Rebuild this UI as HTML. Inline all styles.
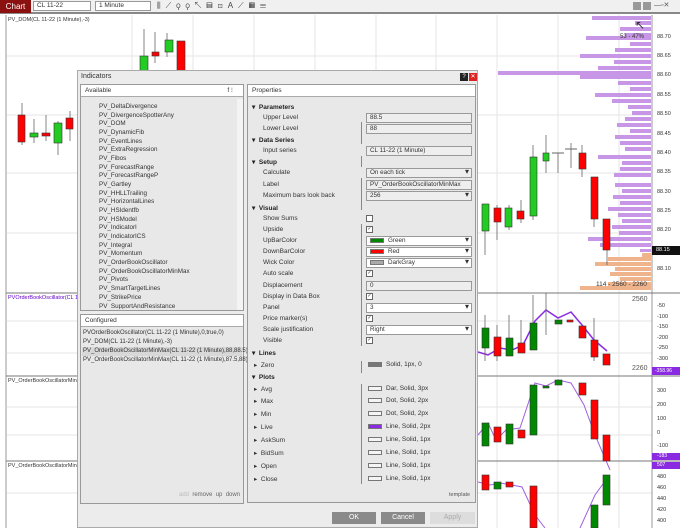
<!DOCTYPE html>
<html><head><meta charset="utf-8"><style>
*{margin:0;padding:0;box-sizing:border-box}
body{width:680px;height:528px;overflow:hidden;background:#fff;font-family:"Liberation Sans",sans-serif;font-size:6.5px;color:#333;position:relative}
.a{position:absolute;white-space:nowrap}
.tb{left:0;top:0;width:680px;height:14px;background:#f0f0f0;border-bottom:2px solid #888}
.sel{height:10px;top:1px;background:#fff;border:1px solid #999;font-size:6.5px;line-height:8px;padding-left:3px}
.dlg{left:77px;top:70px;width:401px;height:458px;background:#ececec;border:1px solid #aaa}
.pn{background:#e8e8e8;border:1px solid #999}
.hd{background:#fff;border-bottom:1px solid #aaa;height:12px;line-height:11px;padding-left:4px;font-size:6.5px}
.li{left:18px;font-size:6.3px;color:#333}
.pr{font-size:6.5px;color:#333}
.sec{font-weight:bold;font-size:6.5px;color:#222}
.vb{left:118px;width:106px;height:10px;border:1px solid #999;background:#eee;line-height:8px;padding-left:3px;font-size:6.3px}
.cb{left:118px;width:7px;height:7px;border:1px solid #666;background:#fff;font-size:5px;line-height:5px;text-align:center}
.sw{display:inline-block;width:14px;height:5px;border:1px solid #777;vertical-align:middle;margin-right:4px}
.dd::after{content:"▾";position:absolute;right:2px;top:-1px;font-size:8px}
.btn{top:512px;height:12px;background:#8a8a8a;color:#fff;text-align:center;line-height:12px;font-size:7px}
.ax{left:657px;font-size:5.5px;color:#333}
</style></head><body>
<div class="a tb"></div>
<div class="a" style="left:0;top:0;width:31px;height:13px;background:#8b1010;color:#fff;font-size:8px;line-height:13px;text-align:center">Chart</div>
<div class="a sel" style="left:33px;width:58px">CL 11-22</div>
<div class="a sel" style="left:95px;width:56px">1 Minute</div>
<div class="a" style="left:157px;top:1px;font-size:8px;color:#444;letter-spacing:5px">⫼⟋⚲⚲↖▤⊡A⟋▦☰</div>
<div class="a" style="left:633px;top:2px;width:8px;height:8px;background:#999"></div>
<div class="a" style="left:643px;top:2px;width:8px;height:8px;background:#999"></div>
<div class="a" style="left:654px;top:1px;font-size:7px;color:#555">—▫✕</div>

<svg class="a" style="left:0;top:15px" width="680" height="513">
<g stroke="#e6e6e6" stroke-width="1">
<line x1="132" y1="0" x2="132" y2="513"/><line x1="193" y1="0" x2="193" y2="513"/><line x1="254" y1="0" x2="254" y2="513"/><line x1="315" y1="0" x2="315" y2="513"/><line x1="376" y1="0" x2="376" y2="513"/><line x1="436" y1="0" x2="436" y2="513"/><line x1="497" y1="0" x2="497" y2="513"/><line x1="558" y1="0" x2="558" y2="513"/><line x1="619" y1="0" x2="619" y2="513"/>
<line x1="7" y1="41" x2="652" y2="41"/><line x1="7" y1="100" x2="652" y2="100"/><line x1="7" y1="158" x2="652" y2="158"/><line x1="7" y1="218" x2="652" y2="218"/>
<line x1="7" y1="306" x2="652" y2="306"/><line x1="7" y1="338" x2="652" y2="338"/><line x1="7" y1="392" x2="652" y2="392"/><line x1="7" y1="420" x2="652" y2="420"/><line x1="7" y1="478" x2="652" y2="478"/>
</g>
<line x1="6" y1="0" x2="6" y2="513" stroke="#999"/>
<line x1="652" y1="0" x2="652" y2="513" stroke="#999"/>
<line x1="6" y1="278" x2="680" y2="278" stroke="#777"/>
<line x1="6" y1="361" x2="680" y2="361" stroke="#777"/>
<line x1="6" y1="446" x2="680" y2="446" stroke="#777"/>
<!-- volume profile -->
<g fill="#c896e6">
<rect x="592" y="1" width="59" height="4"/><rect x="635" y="6" width="16" height="4"/><rect x="620" y="12" width="31" height="4"/><rect x="625" y="18" width="26" height="4"/><rect x="586" y="21" width="65" height="4"/><rect x="630" y="27" width="21" height="4"/><rect x="615" y="33" width="36" height="4"/><rect x="580" y="39" width="71" height="4"/><rect x="614" y="45" width="37" height="4"/><rect x="598" y="51" width="53" height="4"/><rect x="498" y="56" width="153" height="4"/><rect x="580" y="60" width="71" height="4"/><rect x="618" y="66" width="33" height="4"/><rect x="630" y="72" width="21" height="4"/><rect x="595" y="78" width="56" height="4"/><rect x="612" y="84" width="39" height="4"/><rect x="628" y="90" width="23" height="4"/><rect x="632" y="96" width="19" height="4"/><rect x="625" y="102" width="26" height="4"/><rect x="617" y="108" width="34" height="4"/><rect x="630" y="114" width="21" height="4"/><rect x="615" y="120" width="36" height="4"/><rect x="620" y="126" width="31" height="4"/><rect x="625" y="132" width="26" height="4"/><rect x="598" y="140" width="53" height="4"/><rect x="622" y="146" width="29" height="4"/><rect x="620" y="152" width="31" height="4"/><rect x="614" y="158" width="37" height="4"/><rect x="615" y="168" width="36" height="4"/><rect x="622" y="174" width="29" height="4"/><rect x="613" y="180" width="38" height="4"/><rect x="620" y="186" width="31" height="4"/><rect x="608" y="192" width="43" height="4"/><rect x="618" y="198" width="33" height="4"/><rect x="622" y="204" width="29" height="4"/><rect x="612" y="210" width="39" height="4"/><rect x="619" y="216" width="32" height="4"/><rect x="588" y="222" width="63" height="4"/><rect x="600" y="228" width="51" height="4"/><rect x="640" y="234" width="11" height="3"/>
</g>
<g fill="#f0b48c">
<rect x="642" y="238" width="9" height="4"/><rect x="608" y="242" width="43" height="4"/><rect x="595" y="247" width="56" height="4"/><rect x="615" y="252" width="36" height="4"/><rect x="610" y="257" width="41" height="4"/><rect x="620" y="262" width="31" height="4"/><rect x="608" y="267" width="43" height="4"/><rect x="580" y="271" width="71" height="4"/>
</g>
<!-- main candles -->
<g stroke="#666" stroke-width="0.8">
<line x1="22" y1="88" x2="22" y2="130"/><line x1="34" y1="104" x2="34" y2="128"/><line x1="46" y1="100" x2="46" y2="126"/><line x1="58" y1="106" x2="58" y2="140"/><line x1="70" y1="96" x2="70" y2="126"/>
<line x1="144" y1="14" x2="144" y2="60"/><line x1="155" y1="17" x2="155" y2="48"/><line x1="167" y1="18" x2="167" y2="42"/>
<line x1="485" y1="189" x2="485" y2="240"/><line x1="497" y1="190" x2="497" y2="225"/><line x1="509" y1="190" x2="509" y2="215"/><line x1="521" y1="185" x2="521" y2="208"/><line x1="533" y1="130" x2="533" y2="205"/><line x1="546" y1="120" x2="546" y2="158"/><line x1="558" y1="138" x2="558" y2="158"/><line x1="571" y1="128" x2="571" y2="153"/><line x1="582" y1="130" x2="582" y2="162"/><line x1="594" y1="195" x2="594" y2="212"/><line x1="607" y1="235" x2="607" y2="250"/>
</g>
<line x1="552" y1="138" x2="564" y2="138" stroke="#666"/><line x1="565" y1="134" x2="577" y2="134" stroke="#666"/>
<g stroke="#333" stroke-width="0.6">
<rect x="18" y="100" width="7" height="27" fill="#f00"/><rect x="30" y="118" width="8" height="4" fill="#2c2"/><rect x="42" y="118" width="8" height="3" fill="#f00"/><rect x="54" y="108" width="8" height="20" fill="#2c2"/><rect x="66" y="103" width="7" height="11" fill="#f00"/>
<rect x="140" y="41" width="8" height="15" fill="#2c2"/><rect x="152" y="37" width="7" height="4" fill="#f00"/><rect x="165" y="25" width="8" height="12" fill="#2c2"/><rect x="177" y="26" width="8" height="33" fill="#f00"/>
<rect x="482" y="189" width="7" height="27" fill="#2c2"/><rect x="494" y="193" width="7" height="14" fill="#f00"/><rect x="505" y="193" width="7" height="19" fill="#2c2"/><rect x="517" y="196" width="7" height="8" fill="#f00"/><rect x="530" y="142" width="7" height="59" fill="#2c2"/><rect x="543" y="138" width="6" height="8" fill="#2c2"/><rect x="579" y="138" width="7" height="16" fill="#f00"/><rect x="591" y="162" width="7" height="42" fill="#f00"/><rect x="603" y="204" width="7" height="31" fill="#f00"/>
</g>
<!-- panel 2 -->
<polyline points="478,337 488,340 500,333 512,335 523,330 535,306 546,295 558,303 571,297 582,310 594,325 607,336" fill="none" stroke="#8a2be2" stroke-width="1.5"/>
<g stroke="#666" stroke-width="0.8"><line x1="485" y1="300" x2="485" y2="346"/><line x1="497" y1="310" x2="497" y2="346"/><line x1="509" y1="300" x2="509" y2="335"/><line x1="521" y1="305" x2="521" y2="335"/><line x1="533" y1="280" x2="533" y2="320"/><line x1="546" y1="278" x2="546" y2="320"/><line x1="594" y1="303" x2="594" y2="346"/></g>
<g stroke="#333" stroke-width="0.6">
<rect x="482" y="313" width="7" height="20" fill="#080"/><rect x="494" y="322" width="7" height="19" fill="#f00"/><rect x="506" y="323" width="7" height="18" fill="#080"/><rect x="518" y="328" width="7" height="10" fill="#f00"/><rect x="530" y="308" width="7" height="27" fill="#080"/><rect x="555" y="305" width="7" height="4" fill="#080"/><rect x="567" y="305" width="6" height="2" fill="#f00"/><rect x="579" y="311" width="7" height="12" fill="#f00"/><rect x="591" y="325" width="7" height="17" fill="#f00"/><rect x="603" y="339" width="7" height="11" fill="#f00"/>
</g>
<!-- panel 3 -->
<polyline points="478,420 488,408 496,425 506,415 520,413 535,368 546,371 558,365 571,368 584,390 595,420 610,455" fill="none" stroke="#a060e0" stroke-width="1"/>
<g stroke="#333" stroke-width="0.6">
<rect x="482" y="408" width="7" height="23" fill="#080"/><rect x="494" y="412" width="7" height="15" fill="#f00"/><rect x="506" y="409" width="7" height="20" fill="#080"/><rect x="518" y="415" width="7" height="8" fill="#f00"/><rect x="530" y="370" width="7" height="50" fill="#080"/><rect x="543" y="371" width="6" height="2" fill="#080"/><rect x="555" y="365" width="7" height="5" fill="#080"/><rect x="579" y="368" width="7" height="12" fill="#f00"/><rect x="591" y="385" width="7" height="39" fill="#f00"/><rect x="603" y="420" width="7" height="26" fill="#f00"/>
</g>
<!-- panel 4 -->
<polyline points="478,467 490,470 500,468 512,470 522,472 535,500 545,513" fill="none" stroke="#a060e0" stroke-width="1"/>
<polyline points="580,513 595,480 608,462" fill="none" stroke="#a060e0" stroke-width="1"/>
<g stroke="#333" stroke-width="0.6">
<rect x="482" y="460" width="7" height="15" fill="#f00"/><rect x="494" y="467" width="7" height="7" fill="#080"/><rect x="506" y="467" width="7" height="5" fill="#f00"/><rect x="530" y="471" width="7" height="42" fill="#f00"/><rect x="591" y="490" width="7" height="23" fill="#080"/><rect x="603" y="460" width="7" height="30" fill="#080"/>
</g>
</svg>

<div class="a" style="left:8px;top:17px;font-size:5.5px">PV_DOM(CL 11-22 (1 Minute),-3)</div>
<div class="a" style="left:8px;top:295px;font-size:5.5px;color:#60c">PVOrderBookOscillator(CL 11-22</div>
<div class="a" style="left:8px;top:378px;font-size:5.5px">PV_OrderBookOscillatorMinMax</div>
<div class="a" style="left:8px;top:463px;font-size:5.5px">PV_OrderBookOscillatorMinMax</div>
<div class="a" style="left:635px;top:18px;font-size:12px">↖</div>
<div class="a" style="left:620px;top:34px;font-size:6px">53 - 47%</div>
<div class="a" style="left:596px;top:281px;font-size:6.5px">114 - 2560 - 2260</div>
<div class="a" style="left:632px;top:296px;font-size:7px;color:#555">2560</div>
<div class="a" style="left:632px;top:365px;font-size:7px;color:#555">2260</div>
<div class="a ax" style="top:34px">88.70</div><div class="a ax" style="top:53px">88.65</div><div class="a ax" style="top:72px">88.60</div><div class="a ax" style="top:92px">88.55</div><div class="a ax" style="top:111px">88.50</div><div class="a ax" style="top:131px">88.45</div><div class="a ax" style="top:150px">88.40</div><div class="a ax" style="top:169px">88.35</div><div class="a ax" style="top:189px">88.30</div><div class="a ax" style="top:208px">88.25</div><div class="a ax" style="top:227px">88.20</div><div class="a ax" style="top:266px">88.10</div>
<div class="a" style="left:652px;top:246px;width:28px;height:9px;background:#111;color:#fff;font-size:5.5px;line-height:9px;padding-left:4px">88.15</div>
<div class="a ax" style="top:303px">-50</div><div class="a ax" style="top:314px">-100</div><div class="a ax" style="top:324px">-150</div><div class="a ax" style="top:335px">-200</div><div class="a ax" style="top:345px">-250</div><div class="a ax" style="top:356px">-300</div>
<div class="a" style="left:652px;top:367px;width:28px;height:8px;background:#8a2be2;color:#fff;font-size:5px;line-height:8px;padding-left:3px">-358.96</div>
<div class="a ax" style="top:388px">300</div><div class="a ax" style="top:402px">200</div><div class="a ax" style="top:416px">100</div><div class="a ax" style="top:430px">0</div><div class="a ax" style="top:443px">-100</div>
<div class="a" style="left:652px;top:453px;width:28px;height:7px;background:#8a2be2;color:#fff;font-size:5px;line-height:7px;padding-left:5px">-183</div>
<div class="a" style="left:652px;top:462px;width:28px;height:7px;background:#8a2be2;color:#fff;font-size:5px;line-height:7px;padding-left:5px">507</div>
<div class="a ax" style="top:474px">480</div><div class="a ax" style="top:485px">460</div><div class="a ax" style="top:496px">440</div><div class="a ax" style="top:507px">420</div><div class="a ax" style="top:518px">400</div>

<!-- dialog -->
<div class="a dlg">
 <div class="a" style="left:3px;top:2px;font-size:7px;color:#333">Indicators</div>
 <div class="a" style="left:382px;top:2px;width:8px;height:8px;background:#222;color:#fff;font-size:6px;text-align:center;line-height:8px">?</div>
 <div class="a" style="left:391px;top:2px;width:8px;height:8px;background:#d22;color:#fff;font-size:6px;text-align:center;line-height:8px">✕</div>

 <div class="a pn" style="left:2px;top:13px;width:164px;height:227px">
  <div class="hd">Available<span style="float:right;margin-right:10px">f ⁝</span></div>
  <div class="a" style="left:156px;top:14px;width:6px;height:211px;background:#f4f4f4"></div>
  <div class="a li" style="top:18px">PV_DeltaDivergence</div>
  <div class="a li" style="top:27px">PV_DivergenceSpotterAny</div>
  <div class="a li" style="top:35px">PV_DOM</div>
  <div class="a li" style="top:44px">PV_DynamicFib</div>
  <div class="a li" style="top:53px">PV_EventLines</div>
  <div class="a li" style="top:61px">PV_ExtraRegression</div>
  <div class="a li" style="top:70px">PV_Fibos</div>
  <div class="a li" style="top:79px">PV_ForecastRange</div>
  <div class="a li" style="top:87px">PV_ForecastRangeP</div>
  <div class="a li" style="top:96px">PV_Gartley</div>
  <div class="a li" style="top:105px">PV_HHLLTrailing</div>
  <div class="a li" style="top:113px">PV_HorizontalLines</div>
  <div class="a li" style="top:122px">PV_HSIdentfb</div>
  <div class="a li" style="top:131px">PV_HSModel</div>
  <div class="a li" style="top:139px">PV_IndicatorI</div>
  <div class="a li" style="top:148px">PV_IndicatorICS</div>
  <div class="a li" style="top:157px">PV_Integral</div>
  <div class="a li" style="top:165px">PV_Momentum</div>
  <div class="a li" style="top:174px">PV_OrderBookOscillator</div>
  <div class="a li" style="top:183px">PV_OrderBookOscillatorMinMax</div>
  <div class="a li" style="top:191px">PV_Pivots</div>
  <div class="a li" style="top:200px">PV_SmartTargetLines</div>
  <div class="a li" style="top:209px">PV_StrikePrice</div>
  <div class="a li" style="top:218px;height:6px;overflow:hidden">PV_SupportAndResistance</div>
 </div>

 <div class="a pn" style="left:2px;top:243px;width:164px;height:190px">
  <div class="hd">Configured</div>
  <div class="a" style="left:2px;top:15px;font-size:6px">PVOrderBookOscillator(CL 11-22 (1 Minute),0,true,0)</div>
  <div class="a" style="left:2px;top:24px;font-size:6px">PV_DOM(CL 11-22 (1 Minute),-3)</div>
  <div class="a" style="left:1px;top:32px;width:160px;height:9px;background:#d8d8d8"></div>
  <div class="a" style="left:2px;top:33px;font-size:6px">PV_OrderBookOscillatorMinMax(CL 11-22 (1 Minute),88,88.5)</div>
  <div class="a" style="left:2px;top:42px;font-size:6px">PV_OrderBookOscillatorMinMax(CL 11-22 (1 Minute),87.5,88)</div>
  <div class="a" style="left:98px;top:177px;font-size:6px;color:#666"><span style="color:#bbb">add</span>&nbsp; remove &nbsp;up &nbsp;down</div>
 </div>

 <div class="a pn" style="left:169px;top:13px;width:229px;height:419px">
  <div class="hd">Properties</div>
  <div class="a" style="left:113px;top:37px;width:1px;height:22px;background:#888"></div>
  <div class="a" style="left:113px;top:71px;width:1px;height:11px;background:#888"></div>
  <div class="a" style="left:113px;top:93px;width:1px;height:32px;background:#888"></div>
  <div class="a" style="left:113px;top:139px;width:1px;height:122px;background:#888"></div>
  <div class="a" style="left:113px;top:276px;width:1px;height:12px;background:#888"></div>
  <div class="a" style="left:113px;top:299px;width:1px;height:100px;background:#888"></div>

  <div class="a sec" style="left:4px;top:18px">▾ &nbsp;Parameters</div>
  <div class="a pr" style="left:15px;top:29px">Upper Level</div><div class="a vb" style="top:28px">88.5</div>
  <div class="a pr" style="left:15px;top:40px">Lower Level</div><div class="a vb" style="top:39px">88</div>
  <div class="a sec" style="left:4px;top:51px">▾ &nbsp;Data Series</div>
  <div class="a pr" style="left:15px;top:62px">Input series</div><div class="a vb" style="top:61px">CL 11-22 (1 Minute)</div>
  <div class="a sec" style="left:4px;top:73px">▾ &nbsp;Setup</div>
  <div class="a pr" style="left:15px;top:84px">Calculate</div><div class="a vb dd" style="top:83px">On each tick</div>
  <div class="a pr" style="left:15px;top:96px">Label</div><div class="a vb" style="top:95px">PV_OrderBookOscillatorMinMax</div>
  <div class="a pr" style="left:15px;top:107px">Maximum bars look back</div><div class="a vb dd" style="top:106px">256</div>
  <div class="a sec" style="left:4px;top:119px">▾ &nbsp;Visual</div>
  <div class="a pr" style="left:15px;top:130px">Show Sums</div><div class="a cb" style="top:130px"></div>
  <div class="a pr" style="left:15px;top:141px">Upside</div><div class="a cb" style="top:141px">✓</div>
  <div class="a pr" style="left:15px;top:152px">UpBarColor</div><div class="a vb dd" style="top:151px;background:#fff"><span class="sw" style="background:#080"></span>Green</div>
  <div class="a pr" style="left:15px;top:163px">DownBarColor</div><div class="a vb dd" style="top:162px;background:#fff"><span class="sw" style="background:#f00"></span>Red</div>
  <div class="a pr" style="left:15px;top:174px">Wick Color</div><div class="a vb dd" style="top:173px;background:#fff"><span class="sw" style="background:#aaa"></span>DarkGray</div>
  <div class="a pr" style="left:15px;top:185px">Auto scale</div><div class="a cb" style="top:185px">✓</div>
  <div class="a pr" style="left:15px;top:197px">Displacement</div><div class="a vb" style="top:196px">0</div>
  <div class="a pr" style="left:15px;top:208px">Display in Data Box</div><div class="a cb" style="top:208px">✓</div>
  <div class="a pr" style="left:15px;top:219px">Panel</div><div class="a vb dd" style="top:218px;background:#fff">3</div>
  <div class="a pr" style="left:15px;top:230px">Price marker(s)</div><div class="a cb" style="top:230px">✓</div>
  <div class="a pr" style="left:15px;top:241px">Scale justification</div><div class="a vb dd" style="top:240px;background:#fff">Right</div>
  <div class="a pr" style="left:15px;top:252px">Visible</div><div class="a cb" style="top:252px">✓</div>
  <div class="a sec" style="left:4px;top:264px">▾ &nbsp;Lines</div>
  <div class="a pr" style="left:6px;top:276px">▸ &nbsp;Zero</div><div class="a pr" style="left:120px;top:276px"><span class="sw" style="background:#777"></span>Solid, 1px, 0</div>
  <div class="a sec" style="left:4px;top:288px">▾ &nbsp;Plots</div>
  <div class="a pr" style="left:6px;top:300px">▸ &nbsp;Avg</div><div class="a pr" style="left:120px;top:300px"><span class="sw" style="background:#f4f4f4"></span>Dar, Solid, 3px</div>
  <div class="a pr" style="left:6px;top:312px">▸ &nbsp;Max</div><div class="a pr" style="left:120px;top:312px"><span class="sw" style="background:#f4f4f4"></span>Dot, Solid, 2px</div>
  <div class="a pr" style="left:6px;top:325px">▸ &nbsp;Min</div><div class="a pr" style="left:120px;top:325px"><span class="sw" style="background:#f4f4f4"></span>Dot, Solid, 2px</div>
  <div class="a pr" style="left:6px;top:338px">▸ &nbsp;Live</div><div class="a pr" style="left:120px;top:338px"><span class="sw" style="background:#8a2be2"></span>Line, Solid, 2px</div>
  <div class="a pr" style="left:6px;top:351px">▸ &nbsp;AskSum</div><div class="a pr" style="left:120px;top:351px"><span class="sw" style="background:#f4f4f4"></span>Line, Solid, 1px</div>
  <div class="a pr" style="left:6px;top:364px">▸ &nbsp;BidSum</div><div class="a pr" style="left:120px;top:364px"><span class="sw" style="background:#f4f4f4"></span>Line, Solid, 1px</div>
  <div class="a pr" style="left:6px;top:377px">▸ &nbsp;Open</div><div class="a pr" style="left:120px;top:377px"><span class="sw" style="background:#f4f4f4"></span>Line, Solid, 1px</div>
  <div class="a pr" style="left:6px;top:390px">▸ &nbsp;Close</div><div class="a pr" style="left:120px;top:390px"><span class="sw" style="background:#f4f4f4"></span>Line, Solid, 1px</div>
  <div class="a" style="left:201px;top:407px;font-size:5.5px;color:#555">template</div>
 </div>
</div>
<div class="a btn" style="left:332px;width:44px">OK</div>
<div class="a btn" style="left:381px;width:44px">Cancel</div>
<div class="a btn" style="left:430px;width:45px;background:#ddd;color:#aaa">Apply</div>
</body></html>
